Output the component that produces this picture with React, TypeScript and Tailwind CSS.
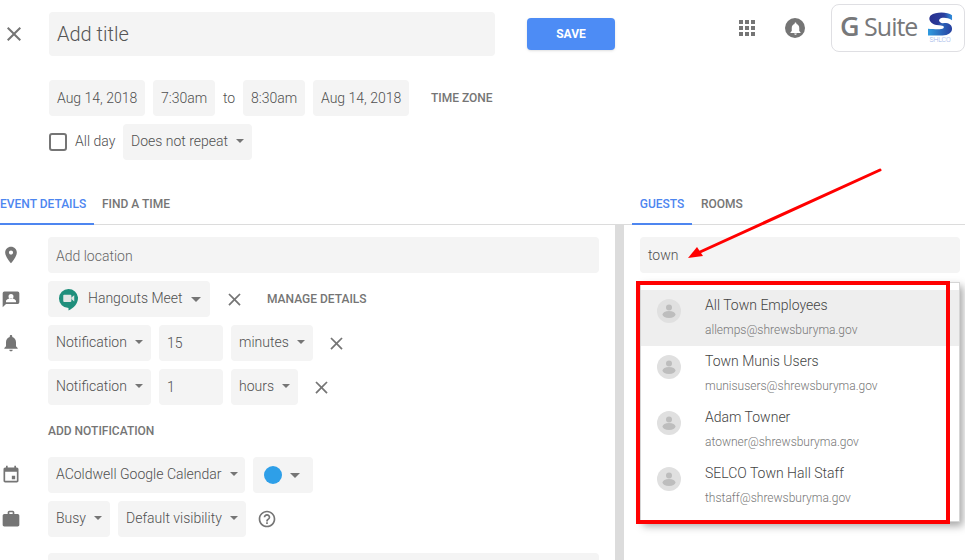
const CLOSE = 'M19 6.41L17.59 5 12 10.59 6.41 5 5 6.41 10.59 12 5 17.59 6.41 19 12 13.41 17.59 19 19 17.59 13.41 12z'
const PLACE = 'M12 2C8.13 2 5 5.13 5 9c0 5.25 7 13 7 13s7-7.75 7-13c0-3.87-3.13-7-7-7zm0 9.5c-1.38 0-2.5-1.12-2.5-2.5s1.12-2.5 2.5-2.5 2.5 1.12 2.5 2.5-1.12 2.5-2.5 2.5z'
const BELL = 'M12 22c1.1 0 2-.9 2-2h-4c0 1.1.89 2 2 2zm6-6v-5c0-3.07-1.64-5.64-4.5-6.32V4c0-.83-.67-1.5-1.5-1.5s-1.5.67-1.5 1.5v.68C7.63 5.36 6 7.92 6 11v5l-2 2v1h16v-1l-2-2z'
const CONTACT = 'M20 3H4a2 2 0 0 0-2 2v17l4-4h14a2 2 0 0 0 2-2V5a2 2 0 0 0-2-2zm-8 3a3 3 0 1 1 0 6 3 3 0 0 1 0-6zm6 10H6v-1.5c0-2 4-3 6-3s6 1 6 3V16z'
const EVENT = 'M19 3h-1V1h-2v2H8V1H6v2H5c-1.1 0-2 .9-2 2v14c0 1.1.9 2 2 2h14c1.1 0 2-.9 2-2V5c0-1.1-.9-2-2-2zm0 16H5V8h14v11zm-6-6h4v4h-4z'
const WORK = 'M20 6h-4V4c0-1.11-.89-2-2-2h-4c-1.11 0-2 .89-2 2v2H4c-1.11 0-1.99.89-1.99 2L2 19c0 1.11.89 2 2 2h16c1.11 0 2-.89 2-2V8c0-1.11-.89-2-2-2zm-6 0h-4V4h4v2z'
const HELP = 'M11 18h2v-2h-2v2zm1-16C6.48 2 2 6.48 2 12s4.48 10 10 10 10-4.48 10-10S17.52 2 12 2zm0 18c-4.41 0-8-3.59-8-8s3.59-8 8-8 8 3.59 8 8-3.59 8-8 8zm0-14c-2.21 0-4 1.79-4 4h2c0-1.1.9-2 2-2s2 .9 2 2c0 2-3 1.75-3 5h2c0-2.25 3-2.5 3-5 0-2.21-1.79-4-4-4z'

const GUESTS = [
  { name: 'All Town Employees', email: 'allemps@shrewsburyma.gov', active: true },
  { name: 'Town Munis Users', email: 'munisusers@shrewsburyma.gov' },
  { name: 'Adam Towner', email: 'atowner@shrewsburyma.gov' },
  { name: 'SELCO Town Hall Staff', email: 'thstaff@shrewsburyma.gov' },
]

function Icon({ d, className }: { d: string; className: string }) {
  return (
    <svg viewBox="0 0 24 24" className={className} fill="#757575">
      <path d={d} />
    </svg>
  )
}

function Caret() {
  return <span className="ml-2 h-0 w-0 border-x-[4px] border-t-[4px] border-x-transparent border-t-[#757575]" />
}

function BigCaret() {
  return <span className="ml-2 h-0 w-0 border-x-[5px] border-t-[5px] border-x-transparent border-t-[#757575]" />
}

function Field({ label, caret, className }: { label: string; caret?: boolean; className: string }) {
  return (
    <div
      className={`flex h-9 items-center rounded-sm bg-[#f4f4f4] px-2 text-sm font-light text-[#505050] ${
        caret ? 'pb-[2px]' : ''
      } ${className}`}
    >
      <span className="whitespace-nowrap">{label}</span>
      {caret && <Caret />}
    </div>
  )
}

function Dismiss({ className }: { className: string }) {
  return <Icon d={CLOSE} className={`size-[21px] ${className}`} />
}

function Row({ icon, className, children }: { icon?: string; className: string; children: React.ReactNode }) {
  return (
    <div className={`flex items-center ${className}`}>
      <div className="flex w-[48px] shrink-0 pl-[1px]">{icon && <Icon d={icon} className="size-5" />}</div>
      {children}
    </div>
  )
}

function MeetLogo() {
  return (
    <svg viewBox="0 0 22 24" className="h-[23px] w-[21px]">
      <path d="M11 1a10 10 0 0 0 0 20v2.6c5.5-2.6 10-7 10-13.6A10 10 0 0 0 11 1z" fill="#1f8f7c" />
      <rect x="5.5" y="7" width="8.5" height="7.5" rx="1" fill="#e2e6e5" />
      <path d="M14 10l3-2.5v6.5L14 11.500z" fill="#e2e6e5" />
    </svg>
  )
}

function SelcoLogo() {
  return (
    <div className="flex w-[26px] flex-col items-center">
      <svg viewBox="0 0 26 24" className="h-[24px] w-[25px]">
        <defs>
          <linearGradient id="selco-top" x1="0" x2="1" y1="0" y2="0">
            <stop offset="0" stopColor="#28308f" />
            <stop offset="0.65" stopColor="#2b3f9e" />
            <stop offset="1" stopColor="#2f8fdc" />
          </linearGradient>
          <linearGradient id="selco-bottom" x1="0" x2="1" y1="0" y2="0">
            <stop offset="0" stopColor="#2f9be0" />
            <stop offset="1" stopColor="#28409f" />
          </linearGradient>
        </defs>
        <path d="M25 3C20 -1 8 -1 3 3c-4 4 0 9 6 10l10 1c-4-3-9-4-7-7 2-2 8-2 13 1z" fill="url(#selco-top)" />
        <path d="M0 24h15c6 0 10-3 10-7 0-4-3-6-8-6l-7 1c4 1 8 2 6 4.500-2 1.500-9 1-16 .5z" fill="url(#selco-bottom)" />
      </svg>
      <span className="text-[7px] leading-[8px] font-light tracking-tight text-[#9db4e8]">SHLCO</span>
    </div>
  )
}

function Avatar() {
  return (
    <svg viewBox="0 0 24 24" className="size-6 shrink-0">
      <circle cx="12" cy="12" r="12" fill="#e0e0e0" />
      <circle cx="12" cy="8.500" r="3" fill="#bdbdbd" />
      <ellipse cx="12" cy="15.500" rx="6.500" ry="3.500" fill="#bdbdbd" />
    </svg>
  )
}

function Tab({ label, active, className }: { label: string; active?: boolean; className: string }) {
  return (
    <div
      className={`flex h-[43px] items-center border-b-2 pt-[2px] text-xs font-medium ${
        active ? 'border-[#4d86f0] text-[#4d86f0]' : 'border-transparent text-[#757575]'
      } ${className}`}
    >
      {label}
    </div>
  )
}

export default function App() {
  return (
    <div className="relative h-[560px] w-[965px] overflow-hidden bg-white font-['Roboto',sans-serif]">
      <header className="flex h-[52px] items-start">
        <div className="flex w-[49px] shrink-0 pt-[22px] pl-[2px]">
          <Icon d={CLOSE} className="size-[24px]" />
        </div>
        <div className="mt-3 flex h-11 w-[446px] items-center rounded-sm bg-[#f4f4f4] px-2 text-xl font-light text-[#555]">
          Add title
        </div>
        <button
          type="button"
          className="mt-[18px] ml-8 h-8 w-[88px] rounded-sm bg-[#4d8cf5] text-xs font-bold text-white shadow-sm"
        >
          SAVE
        </button>
        <div className="mt-5 ml-[124px] grid size-4 grid-cols-3 gap-[2px]">
          {Array.from({ length: 9 }).map((_, i) => (
            <span key={i} className="bg-[#757575]" />
          ))}
        </div>
        <div className="mt-[18px] ml-[30px] flex size-5 items-center justify-center rounded-full bg-[#757575]">
          <svg viewBox="0 0 24 24" className="size-[15px]" fill="#fff">
            <path d={BELL} />
          </svg>
        </div>
        <div className="mt-1 ml-[26px] flex h-12 w-[134px] items-center justify-between rounded-lg border border-[#dfdfe3] pr-[11px] pl-2">
          <span className="mb-[5px] font-['Open_Sans',sans-serif] text-[25px] leading-none tracking-[-1px] text-[#77787a]">
            <span className="text-[27px] font-semibold">G</span> Suite
          </span>
          <SelcoLogo />
        </div>
      </header>

      <div className="mt-7 ml-[49px] flex h-9 items-center">
        <Field label="Aug 14, 2018" className="w-24" />
        <Field label="7:30am" className="ml-2 w-[62px]" />
        <span className="ml-2 w-5 text-sm font-light text-[#505050]">to</span>
        <Field label="8:30am" className="w-[62px]" />
        <Field label="Aug 14, 2018" className="ml-2 w-24" />
        <span className="ml-[22px] text-xs font-medium text-[#757575]">TIME ZONE</span>
      </div>

      <div className="mt-2 ml-[49px] flex h-9 items-center">
        <span className="size-[18px] rounded-[3px] border-2 border-[#757575]" />
        <span className="ml-2 w-[48px] pb-[2px] text-sm font-light text-[#505050]">All day</span>
        <Field label="Does not repeat" caret className="w-[129px]" />
      </div>

      <div className="mt-[22px] flex h-[43px] border-b border-[#dcdcdc]">
        <Tab label="EVENT DETAILS" active className="w-[94px]" />
        <Tab label="FIND A TIME" className="ml-2 w-[80px]" />
        <Tab label="GUESTS" active className="ml-[450px] w-[60px] justify-center" />
        <Tab label="ROOMS" className="ml-[9px] w-[50px]" />
      </div>

      <div className="flex h-[336px]">
        <main className="w-[615px] shrink-0 overflow-hidden pt-3">
          <Row icon={PLACE} className="pr-4">
            <div className="flex h-9 flex-1 items-center rounded-sm bg-[#f4f4f4] px-2 pt-[2px] text-sm font-light text-[#666]">
              Add location
            </div>
          </Row>
          <Row icon={CONTACT} className="mt-2">
            <div className="flex h-9 w-[162px] items-center rounded-sm bg-[#f4f4f4] pl-[10px] text-sm font-light text-[#505050]">
              <MeetLogo />
              <span className="ml-[9px] pb-[2px]">Hangouts Meet</span>
              <BigCaret />
            </div>
            <Dismiss className="ml-[14px]" />
            <span className="ml-[22px] text-xs font-medium text-[#757575]">MANAGE DETAILS</span>
          </Row>
          <Row icon={BELL} className="mt-2">
            <Field label="Notification" caret className="w-[103px]" />
            <Field label="15" className="ml-2 w-16" />
            <Field label="minutes" caret className="ml-2 w-[82px]" />
            <Dismiss className="ml-[13px]" />
          </Row>
          <Row className="mt-2">
            <Field label="Notification" caret className="w-[103px]" />
            <Field label="1" className="ml-2 w-16" />
            <Field label="hours" caret className="ml-2 w-[67px]" />
            <Dismiss className="ml-[13px]" />
          </Row>
          <div className="mt-[19px] ml-12 text-xs leading-[14px] font-medium text-[#757575]">ADD NOTIFICATION</div>
          <Row icon={EVENT} className="mt-[19px]">
            <Field label="AColdwell Google Calendar" caret className="w-[197px]" />
            <div className="ml-2 flex h-9 w-[60px] items-center rounded-sm bg-[#f4f4f4] pl-[11px]">
              <span className="size-[18px] rounded-full bg-[#2e9fe8]" />
              <BigCaret />
            </div>
          </Row>
          <Row icon={WORK} className="mt-2">
            <Field label="Busy" caret className="w-[62px]" />
            <Field label="Default visibility" caret className="ml-2 w-[128px]" />
            <Icon d={HELP} className="mt-[-1px] ml-[11px] size-5" />
          </Row>
          <div className="mt-4 mr-4 ml-12 h-9 rounded-sm bg-[#f4f4f4]" />
        </main>

        <div className="w-[9px] shrink-0 bg-[#dcdcdc]" />

        <aside className="relative flex-1 pt-3 pr-[5px] pl-4">
          <div className="flex h-9 items-center rounded-sm bg-[#f4f4f4] px-2 text-sm font-light text-[#505050]">
            town
          </div>
          <div className="absolute top-[57px] left-[16px] w-[320px] border border-[#d5d5d5] bg-white pt-[7px] pb-[7px] shadow-[3px_4px_8px_rgba(0,0,0,0.35)]">
            {GUESTS.map((guest) => (
              <div key={guest.email} className={`flex h-14 pl-[16px] ${guest.active ? 'bg-[#eeeeee]' : ''}`}>
                <div className="pt-[9px]">
                  <Avatar />
                </div>
                <div className="ml-6 pt-[6px]">
                  <div className="text-sm leading-[18px] font-light text-[#444]">{guest.name}</div>
                  <div className="mt-[8px] text-xs leading-4 font-light text-[#777]">{guest.email}</div>
                </div>
              </div>
            ))}
          </div>
        </aside>
      </div>

      <div className="absolute top-[281px] left-[636px] h-[243px] w-[314px] border-4 border-[#ff0000]" />
      <svg viewBox="0 0 965 560" className="absolute inset-0 size-full" fill="none">
        <path d="M880 170L700 252" stroke="#ff0000" strokeWidth="3" strokeLinecap="round" />
        <path d="M688 258L697 247L703 256z" fill="#ff0000" />
      </svg>
    </div>
  )
}
